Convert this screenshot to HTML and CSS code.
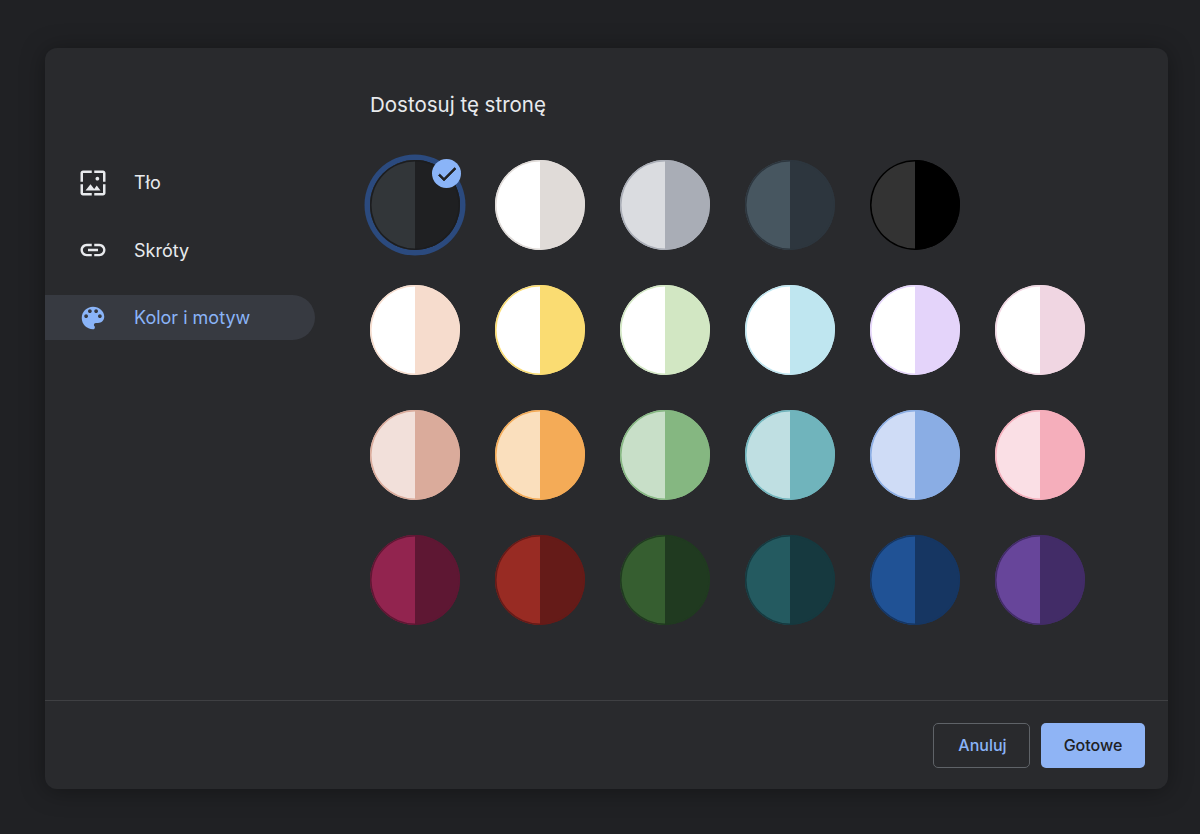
FILE: index.html
```html
<!DOCTYPE html>
<html lang="pl">
	<head>
		<meta charset="UTF-8" />
		<meta name="viewport" content="width=device-width, initial-scale=1.0" />
		<title>Dostosuj tę stronę</title>
		<link rel="stylesheet" href="styles.css">
	</head>
	<body>
		<div class="dialog">
			<div class="dialog-body">
				<nav class="sidebar">
					<a class="nav-item">
						<svg class="nav-icon" viewBox="0 0 24 24"><path d="M4 4h7V2H4c-1.1 0-2 .9-2 2v7h2V4zm6 9l-4 5h12l-3-4-2.03 2.71L10 13zm7-4.5c0-.83-.67-1.5-1.5-1.5S14 7.67 14 8.5s.67 1.5 1.5 1.5S17 9.33 17 8.5zM20 2h-7v2h7v7h2V4c0-1.1-.9-2-2-2zm0 18h-7v2h7c1.1 0 2-.9 2-2v-7h-2v7zM4 13H2v7c0 1.1.9 2 2 2h7v-2H4v-7z"/></svg>
						<span>Tło</span>
					</a>
					<a class="nav-item">
						<svg class="nav-icon" viewBox="0 0 24 24"><path d="M3.9 12c0-1.71 1.39-3.1 3.1-3.1h4V7H7c-2.76 0-5 2.24-5 5s2.24 5 5 5h4v-1.9H7c-1.71 0-3.1-1.39-3.1-3.1zM8 13h8v-2H8v2zm9-6h-4v1.9h4c1.71 0 3.1 1.39 3.1 3.1s-1.39 3.1-3.1 3.1h-4V17h4c2.76 0 5-2.24 5-5s-2.24-5-5-5z"/></svg>
						<span>Skróty</span>
					</a>
					<a class="nav-item active">
						<svg class="nav-icon" viewBox="0 0 24 24"><path d="M12 3c-4.97 0-9 4.03-9 9s4.03 9 9 9c.83 0 1.5-.67 1.5-1.5 0-.39-.15-.74-.39-1.01-.23-.26-.38-.61-.38-.99 0-.83.67-1.5 1.5-1.5H16c2.76 0 5-2.24 5-5 0-4.42-4.03-8-9-8zm-5.5 9c-.83 0-1.5-.67-1.5-1.5S5.67 9 6.5 9 8 9.67 8 10.5 7.33 12 6.5 12zm3-4C8.67 8 8 7.33 8 6.5S8.67 5 9.5 5s1.5.67 1.5 1.5S10.33 8 9.5 8zm5 0c-.83 0-1.5-.67-1.5-1.5S13.67 5 14.5 5s1.5.67 1.5 1.5S15.33 8 14.5 8zm3 4c-.83 0-1.5-.67-1.5-1.5S16.67 9 17.5 9s1.5.67 1.5 1.5-.67 1.5-1.5 1.5z"/></svg>
						<span>Kolor i motyw</span>
					</a>
				</nav>

				<main class="content">
					<h1 class="title">Dostosuj tę stronę</h1>
					<div class="swatches">
						<div class="swatch default selected">
							<span class="check">
								<svg viewBox="0 0 24 24"><path d="M9 16.17 4.83 12l-1.42 1.41L9 19 21 7l-1.41-1.41z"/></svg>
							</span>
						</div>
						<div class="swatch stone"></div>
						<div class="swatch silver"></div>
						<div class="swatch slate"></div>
						<div class="swatch black"></div>
						<div class="swatch-gap"></div>

						<div class="swatch peach"></div>
						<div class="swatch yellow"></div>
						<div class="swatch mint"></div>
						<div class="swatch sky"></div>
						<div class="swatch lilac"></div>
						<div class="swatch blush"></div>

						<div class="swatch clay"></div>
						<div class="swatch orange"></div>
						<div class="swatch green"></div>
						<div class="swatch teal"></div>
						<div class="swatch blue"></div>
						<div class="swatch pink"></div>

						<div class="swatch wine"></div>
						<div class="swatch red"></div>
						<div class="swatch forest"></div>
						<div class="swatch pine"></div>
						<div class="swatch navy"></div>
						<div class="swatch purple"></div>
					</div>
				</main>
			</div>

			<footer class="dialog-footer">
				<button class="btn btn-cancel">Anuluj</button>
				<button class="btn btn-done">Gotowe</button>
			</footer>
		</div>
	</body>
</html>
```

FILE: styles.css
```css
* {
	box-sizing: border-box;
}

html,
body {
	height: 100%;
}

body {
	margin: 0;
	padding: 48px 32px 45px 45px;
	background: #202124;
	font-family: Inter, 'Liberation Sans', sans-serif;
	overflow: hidden;
}

.dialog {
	display: flex;
	flex-direction: column;
	height: 741px;
	background: #292a2d;
	border-radius: 12px;
	box-shadow: 0 2px 24px rgba(0, 0, 0, 0.35);
}

.dialog-body {
	display: flex;
	flex: 1;
}

.sidebar {
	display: flex;
	flex-direction: column;
	gap: 22.5px;
	width: 325px;
	padding-top: 112px;
}

.nav-item {
	display: flex;
	align-items: center;
	width: 270px;
	height: 45px;
	padding-left: 33px;
	border-radius: 0 23px 23px 0;
	color: #e8eaed;
	font-size: 18px;
}

.nav-item span {
	margin-left: 26px;
}

.nav-icon {
	width: 30px;
	height: 30px;
	fill: #e8eaed;
}

.nav-item.active {
	background: #373a41;
	color: #8ab4f8;
}

.nav-item.active .nav-icon {
	fill: #8ab4f8;
}

.content {
	flex: 1;
	padding-top: 43px;
}

.title {
	margin: 0 0 41px;
	height: 28px;
	color: #e8eaed;
	font-size: 20.5px;
	font-weight: 400;
	line-height: 28px;
}

.swatches {
	display: grid;
	grid-template-columns: repeat(6, 90px);
	grid-auto-rows: 90px;
	gap: 35px;
}

.swatch {
	position: relative;
	border-radius: 50%;
	background: linear-gradient(90deg, var(--left) 50%, var(--right) 50%);
	box-shadow: inset 0 0 0 1.5px var(--right);
}

.selected {
	box-shadow: inset 0 0 0 1.5px #1c1d1f, 0 0 0 5.5px #2b4a7e;
}

.check {
	position: absolute;
	top: -1px;
	right: -1px;
	display: flex;
	align-items: center;
	justify-content: center;
	width: 29px;
	height: 29px;
	border-radius: 50%;
	background: #8ab4f8;
}

.check svg {
	width: 24px;
	height: 24px;
	fill: #202124;
	stroke: #202124;
	stroke-width: 0.7;
}

.default { --left: #323639; --right: #1f2022; }
.stone { --left: #ffffff; --right: #e0dbd8; }
.silver { --left: #dadce0; --right: #a9adb6; }
.slate { --left: #475660; --right: #2d363e; }
.black { --left: #333333; --right: #000000; }

.peach { --left: #ffffff; --right: #f6dccd; }
.yellow { --left: #ffffff; --right: #fadc72; }
.mint { --left: #ffffff; --right: #d2e7c3; }
.sky { --left: #ffffff; --right: #bfe6f0; }
.lilac { --left: #ffffff; --right: #e4d4fa; }
.blush { --left: #ffffff; --right: #f0d6e2; }

.clay { --left: #f2e0da; --right: #daab9b; }
.orange { --left: #fadfbd; --right: #f4ab57; }
.green { --left: #c8dfc8; --right: #85b781; }
.teal { --left: #bfdfe2; --right: #70b4bc; }
.blue { --left: #cfdcf6; --right: #8aade4; }
.pink { --left: #fadfe5; --right: #f5aebb; }

.wine { --left: #92244f; --right: #5e1733; }
.red { --left: #982b23; --right: #651b18; }
.forest { --left: #365e30; --right: #203a20; }
.pine { --left: #245a60; --right: #16393f; }
.navy { --left: #205295; --right: #163662; }
.purple { --left: #67459a; --right: #422c67; }

.dialog-footer {
	display: flex;
	justify-content: flex-end;
	align-items: flex-start;
	gap: 11px;
	height: 89px;
	padding: 22px 23px 0 0;
	border-top: 1px solid #3f4043;
}

.btn {
	height: 45px;
	padding: 0 0 2px;
	border-radius: 5px;
	font-family: inherit;
	font-size: 16px;
	font-weight: 500;
}

.btn-cancel {
	width: 97px;
	padding-left: 2px;
	background: transparent;
	border: 1.5px solid #5f6368;
	color: #8ab4f8;
}

.btn-done {
	width: 104px;
	background: #8fb4f5;
	border: 0;
	color: #202124;
}
```
